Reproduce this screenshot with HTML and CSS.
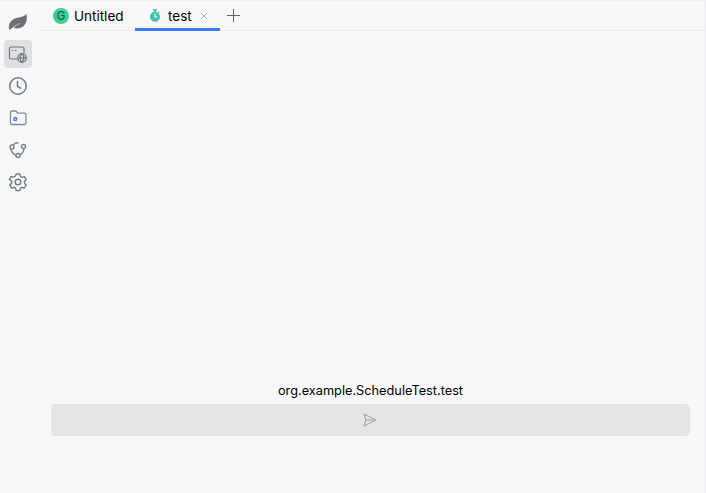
FILE: index.html
```html
<!DOCTYPE html>
<html lang="en">
<head>
<meta charset="utf-8">
<title>test</title>
<link rel="stylesheet" href="styles.css">
</head>
<body>
<div class="app">
  <nav class="rail">
    <div class="rail-item">
      <svg class="ico" viewBox="0 0 20 20"><path fill="#6f7076" d="M1 17.500C0 11 4 6.800 9.500 5.800c3.500-.6 7-1.300 9-3.800 .9 5.800-.3 10.300-3.800 12.800-3 2.100-6.700 2.100-9 .9 2.200-2.200 4.600-3.700 7.300-4.800-3.300 1-6.300 2.700-8.300 4.600-1.500 1.400-2.800 2.500-3.700 2z"/></svg>
    </div>
    <div class="rail-item active">
      <svg class="ico" viewBox="0 0 20 20" fill="none" stroke="#70737f" stroke-width="1.200"><path d="M9 15H3a1.500 1.500 0 0 1-1.500-1.500v-9A1.500 1.500 0 0 1 3 3h11.500A1.500 1.500 0 0 1 16 4.500V9"/><path d="M4 6.500h1.500M7 6.500h1.500"/><circle cx="14" cy="14" r="4.300"/><path d="M9.700 14h8.600M14 9.700c-2.400 2.600-2.400 6 0 8.600M14 9.700c2.400 2.600 2.400 6 0 8.600"/></svg>
    </div>
    <div class="rail-item">
      <svg class="ico" viewBox="0 0 20 20" fill="none" stroke="#747683" stroke-width="1.500"><circle cx="10" cy="10" r="8.200"/><path d="M9.500 5.500v5l3 1.700" stroke-linecap="round"/></svg>
    </div>
    <div class="rail-item">
      <svg class="ico" viewBox="0 0 20 20" fill="none" stroke="#858794" stroke-width="1.300"><path d="M2.500 4.500A1.500 1.500 0 0 1 4 3h4l1.800 2.200H16.500A1.500 1.500 0 0 1 18 6.700V15a1.500 1.500 0 0 1-1.500 1.500H4A1.500 1.500 0 0 1 2.500 15z"/><circle cx="7.300" cy="11" r="1.500" stroke="#3b7cf5" stroke-width="1.400"/></svg>
    </div>
    <div class="rail-item">
      <svg class="ico" viewBox="0 0 20 20" fill="none" stroke="#7c7e8b" stroke-width="1.400"><circle cx="4" cy="7" r="2"/><circle cx="15.500" cy="6.500" r="2"/><circle cx="10" cy="15.500" r="2"/><path d="M3 9.200c.3 2.600 2 4.900 5.200 6M11.900 15c2.200-1.300 3.800-3.900 4.100-6.500M5 4.900C6.500 3.300 8 2.700 10.500 2.700"/></svg>
    </div>
    <div class="rail-item">
      <svg class="ico" viewBox="0 0 20 20" fill="none" stroke="#747683" stroke-width="1.400" stroke-linejoin="round"><path d="M8.200 2h3.600l.6 2.400 1.600.9 2.400-.7 1.800 3.100-1.800 1.700v1.800l1.800 1.700-1.800 3.100-2.400-.7-1.600.9-.6 2.400H8.200l-.6-2.400-1.600-.9-2.400.7-1.800-3.100 1.800-1.700V9.200L1.400 7.500l1.800-3.100 2.400.7 1.600-.9z"/><circle cx="10" cy="10.100" r="2.800"/></svg>
    </div>
  </nav>
  <main class="content">
    <header class="tabs">
      <div class="tab">
        <span class="badge">G</span>
        <span class="tab-label">Untitled</span>
      </div>
      <div class="tab tab-active">
        <svg class="timer" viewBox="0 0 14 16"><path fill="#45bfae" d="M4.500 0h5v1.500H8v1.600a5.800 5.800 0 1 1-2 0V1.500H4.500z"/><path fill="#45bfae" d="M11.300 2.400l1.300 1.200-1 1.100-1.300-1.200z"/><path fill="none" stroke="#e8f8f5" stroke-width="1.300" d="M7 5.500v3.500h2.500"/></svg>
        <span class="tab-label">test</span>
        <svg class="close" viewBox="0 0 9 9"><path d="M1 1l7 7M8 1L1 8" stroke="#a6a8b4" stroke-width="1.100" fill="none"/></svg>
      </div>
      <svg class="plus" viewBox="0 0 14 14"><path d="M7 0v14M0 7h14" stroke="#626570" stroke-width="1.100" fill="none"/></svg>
    </header>
    <section class="body">
      <div class="caption">org.example.ScheduleTest.test</div>
      <div class="send">
        <svg class="send-ico" viewBox="0 0 14 14" fill="none" stroke="#a9a9ab" stroke-width="1.100" stroke-linejoin="round"><path d="M1 1l12 6-12 6 1.800-6z"/><path d="M2.800 7H13"/></svg>
      </div>
    </section>
  </main>
</div>
</body>
</html>
```
FILE: styles.css
```css
* { box-sizing: border-box; }
html, body { margin: 0; height: 100%; }
body {
  background: #f7f8fa;
  font-family: "Inter", "Liberation Sans", sans-serif;
  color: #000;
  overflow: hidden;
}
.app {
  display: flex;
  height: 493px;
  border-top: 1px solid #eef0f3;
  border-right: 1px solid #e9ebee;
}
.rail {
  width: 41px;
  flex: none;
  display: flex;
  flex-direction: column;
  align-items: center;
  gap: 4px;
  padding: 7px 5px 0 0;
}
.rail-item {
  width: 28px;
  height: 28px;
  border-radius: 4px;
  display: flex;
  align-items: center;
  justify-content: center;
}
.rail-item.active { background: #dfe0e3; }
.ico { width: 20px; height: 20px; }
.content { flex: 1; display: flex; flex-direction: column; min-width: 0; }
.tabs {
  height: 30px;
  display: flex;
  align-items: center;
  border-bottom: 1px solid #e9ebee;
  padding-left: 12px;
}
.tab {
  height: 30px;
  display: flex;
  align-items: center;
  font-size: 13.500px;
}
.tab:first-child { width: 82px; }
.badge {
  width: 16px;
  height: 16px;
  border-radius: 50%;
  background: #3ecf96;
  color: #14513c;
  font-size: 11.500px;
  display: flex;
  align-items: center;
  justify-content: center;
  margin-right: 5px;
}
.tab-active {
  width: 85px;
  border-bottom: 3px solid #3b7cf5;
  padding: 3px 0 0 14px;
}
.timer { width: 12px; height: 14px; margin-right: 7px; }
.close { width: 8px; height: 8px; margin-left: 8px; }
.plus { width: 13px; height: 13px; margin-left: 7px; }
.body {
  flex: 1;
  display: flex;
  flex-direction: column;
  justify-content: flex-end;
  padding: 0 15px 57px 10px;
}
.caption {
  font-size: 12.750px;
  text-align: center;
  margin-bottom: 5px;
  line-height: 16px;
}
.send {
  height: 32px;
  background: #e5e5e7;
  border-radius: 4px;
  display: flex;
  align-items: center;
  justify-content: center;
}
.send-ico { width: 14px; height: 14px; margin-right: 2px; }
```
